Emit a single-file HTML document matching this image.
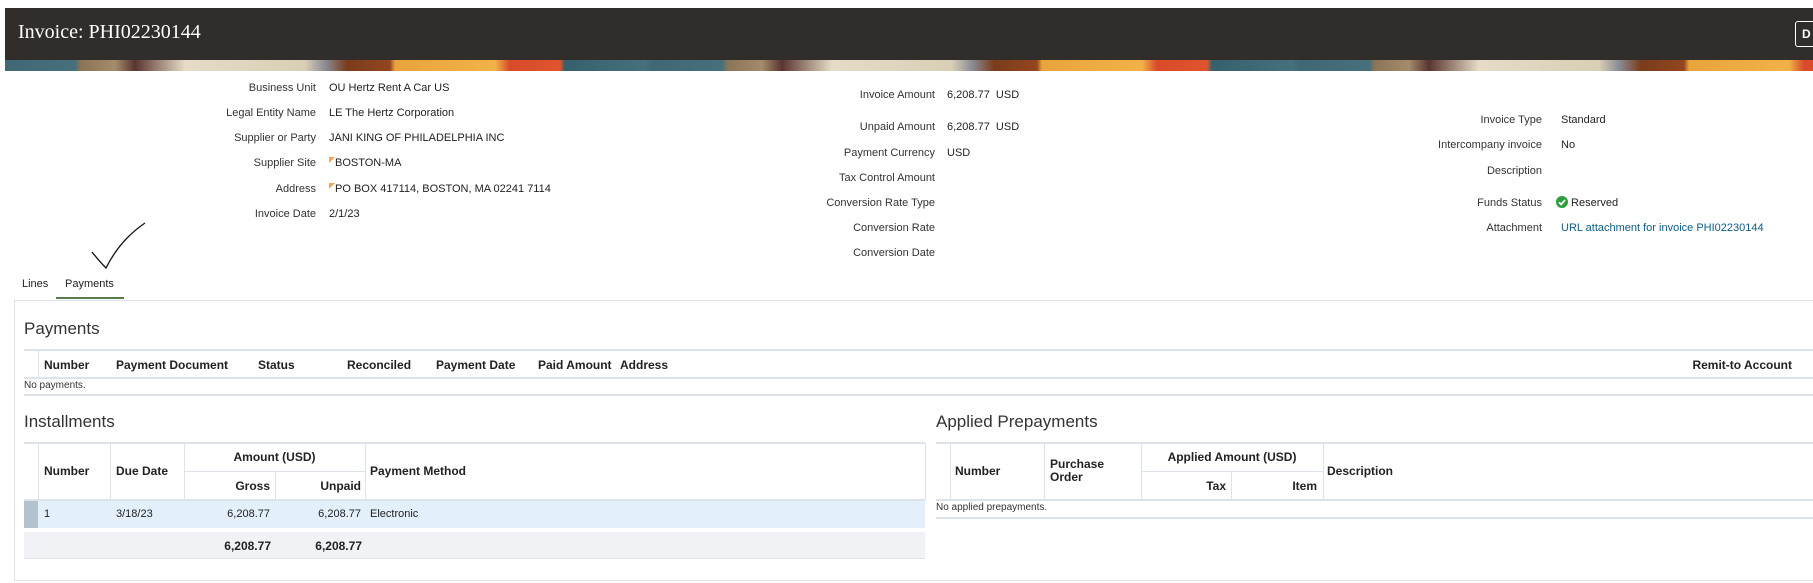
<!DOCTYPE html>
<html><head><meta charset="utf-8"><style>
*{margin:0;padding:0;box-sizing:border-box}
body{width:1813px;height:583px;background:#fff;font-family:"Liberation Sans",Arial,sans-serif;color:#333;position:relative;overflow:hidden;font-size:11px}
.abs{position:absolute;white-space:nowrap}
.bar{left:5px;top:8px;width:1808px;height:52px;background:#312d2a}
.ban{left:5px;top:60px;width:1808px;height:11px;background:repeating-linear-gradient(90deg,#3f6874 0,#47707c 70px,#8c7557 76px,#a38b6b 110px,#5a3530 130px,#e6dcc6 180px,#d9ceb6 300px,#8a8c95 320px,#7a3c1c 342px,#93461f 385px,#e9a43c 390px,#f0b247 490px,#d84a2a 505px,#e0542d 555px,#35606c 560px,#45707c 640px,#3f6874 647px)}
.title{left:18px;top:21px;font-family:"Liberation Serif",serif;font-size:20px;color:#fff}
.btn{left:1795px;top:21px;width:40px;height:26px;border:1px solid #fff;border-radius:3px;color:#fff;font-weight:bold;font-size:12px;padding:5px 6px}
.l{text-align:right;font-size:11px;color:#333}
.v{font-size:11px;color:#222}
.pnl{left:14px;top:300px;width:1810px;height:281px;border:1px solid #dde3ea}
.h2{font-size:17px;color:#333;font-weight:normal}
.th{font-weight:bold;font-size:12px;color:#222}
.hl{height:2px;background:#dde3ea}
.vl{width:1px;background:#dde3ea}
.r{text-align:right}
</style></head><body>
<div class="abs bar"></div><div class="abs ban"></div>
<div class="abs title">Invoice: PHI02230144</div>
<div class="abs btn">D</div>

<div class="abs l" style="right:1497px;top:82px">Business Unit</div><div class="abs v" style="left:329px;top:82px">OU Hertz Rent A Car US</div>
<div class="abs l" style="right:1497px;top:107px">Legal Entity Name</div><div class="abs v" style="left:329px;top:107px">LE The Hertz Corporation</div>
<div class="abs l" style="right:1497px;top:132px">Supplier or Party</div><div class="abs v" style="left:329px;top:132px">JANI KING OF PHILADELPHIA INC</div>
<div class="abs l" style="right:1497px;top:157px">Supplier Site</div><div class="abs v" style="left:329px;top:157px"><span style="display:inline-block;width:0;height:0;border-top:6px solid #f4a460;border-right:6px solid transparent;vertical-align:top"></span>BOSTON-MA</div>
<div class="abs l" style="right:1497px;top:183px">Address</div><div class="abs v" style="left:329px;top:183px"><span style="display:inline-block;width:0;height:0;border-top:6px solid #f4a460;border-right:6px solid transparent;vertical-align:top"></span>PO BOX 417114, BOSTON, MA 02241 7114</div>
<div class="abs l" style="right:1497px;top:208px">Invoice Date</div><div class="abs v" style="left:329px;top:208px">2/1/23</div>

<div class="abs l" style="right:878px;top:89px">Invoice Amount</div><div class="abs v" style="left:947px;top:89px">6,208.77&nbsp; USD</div>
<div class="abs l" style="right:878px;top:121px">Unpaid Amount</div><div class="abs v" style="left:947px;top:121px">6,208.77&nbsp; USD</div>
<div class="abs l" style="right:878px;top:147px">Payment Currency</div><div class="abs v" style="left:947px;top:147px">USD</div>
<div class="abs l" style="right:878px;top:172px">Tax Control Amount</div>
<div class="abs l" style="right:878px;top:197px">Conversion Rate Type</div>
<div class="abs l" style="right:878px;top:222px">Conversion Rate</div>
<div class="abs l" style="right:878px;top:247px">Conversion Date</div>

<div class="abs l" style="right:271px;top:114px">Invoice Type</div><div class="abs v" style="left:1561px;top:114px">Standard</div>
<div class="abs l" style="right:271px;top:139px">Intercompany invoice</div><div class="abs v" style="left:1561px;top:139px">No</div>
<div class="abs l" style="right:271px;top:165px">Description</div>
<div class="abs l" style="right:271px;top:197px">Funds Status</div><div class="abs v" style="left:1556px;top:196px"><svg width="12" height="12" style="vertical-align:-2px"><circle cx="6" cy="6" r="6" fill="#2e9e3e"/><path d="M3 6.2 L5.2 8.4 L9 4" stroke="#fff" stroke-width="1.8" fill="none"/></svg> Reserved</div>
<div class="abs l" style="right:271px;top:222px">Attachment</div><div class="abs v" style="left:1561px;top:222px;color:#0e5c86">URL attachment for invoice PHI02230144</div>

<svg class="abs" style="left:0;top:0" width="200" height="290"><path d="M92 252 Q100 262 106 268 Q120 240 145 223" stroke="#111" stroke-width="1.3" fill="none"/></svg>

<div class="abs" style="left:22px;top:278px;font-size:11px;color:#222">Lines</div>
<div class="abs" style="left:65px;top:278px;font-size:11px;color:#222">Payments</div>
<div class="abs" style="left:56px;top:297px;width:68px;height:2px;background:#5a7a4a"></div>

<div class="abs pnl"></div>
<div class="abs h2" style="left:24px;top:319px">Payments</div>
<div class="abs hl" style="left:24px;top:349px;width:1790px"></div>
<div class="abs vl" style="left:38px;top:350px;height:28px"></div>
<div class="abs th" style="left:44px;top:358px">Number</div>
<div class="abs th" style="left:116px;top:358px">Payment Document</div>
<div class="abs th" style="left:258px;top:358px">Status</div>
<div class="abs th" style="left:347px;top:358px">Reconciled</div>
<div class="abs th" style="left:436px;top:358px">Payment Date</div>
<div class="abs th" style="left:538px;top:358px">Paid Amount</div>
<div class="abs th" style="left:620px;top:358px">Address</div>
<div class="abs th r" style="right:21px;top:358px">Remit-to Account</div>
<div class="abs hl" style="left:24px;top:377px;width:1790px"></div>
<div class="abs" style="left:24px;top:380px;font-size:10px">No payments.</div>
<div class="abs hl" style="left:24px;top:394px;width:1790px"></div>

<div class="abs h2" style="left:24px;top:412px">Installments</div>
<div class="abs hl" style="left:24px;top:442px;width:901px"></div>
<div class="abs vl" style="left:38px;top:443px;height:57px"></div>
<div class="abs vl" style="left:110px;top:443px;height:57px"></div>
<div class="abs vl" style="left:184px;top:443px;height:57px"></div>
<div class="abs vl" style="left:275px;top:472px;height:28px"></div>
<div class="abs vl" style="left:365px;top:443px;height:57px"></div>
<div class="abs vl" style="left:925px;top:443px;height:57px"></div>
<div class="abs" style="left:184px;top:471px;width:181px;height:1px;background:#dde3ea"></div>
<div class="abs th" style="left:44px;top:464px">Number</div>
<div class="abs th" style="left:116px;top:464px">Due Date</div>
<div class="abs th" style="left:184px;width:181px;text-align:center;top:450px">Amount (USD)</div>
<div class="abs th r" style="right:1543px;top:479px">Gross</div>
<div class="abs th r" style="right:1452px;top:479px">Unpaid</div>
<div class="abs th" style="left:370px;top:464px">Payment Method</div>
<div class="abs hl" style="left:24px;top:499px;width:901px"></div>
<div class="abs" style="left:24px;top:501px;width:901px;height:27px;background:#e3effb"></div>
<div class="abs" style="left:24px;top:501px;width:14px;height:27px;background:#b2c2cf"></div>
<div class="abs v" style="left:44px;top:508px">1</div>
<div class="abs v" style="left:116px;top:508px">3/18/23</div>
<div class="abs v r" style="right:1543px;top:508px">6,208.77</div>
<div class="abs v r" style="right:1452px;top:508px">6,208.77</div>
<div class="abs v" style="left:370px;top:508px">Electronic</div>
<div class="abs" style="left:24px;top:532px;width:901px;height:27px;background:#f0f2f5;border-bottom:1px solid #dde3ea"></div>
<div class="abs th r" style="right:1542px;top:539px">6,208.77</div>
<div class="abs th r" style="right:1451px;top:539px">6,208.77</div>

<div class="abs h2" style="left:936px;top:412px">Applied Prepayments</div>
<div class="abs hl" style="left:936px;top:442px;width:877px"></div>
<div class="abs vl" style="left:950px;top:443px;height:57px"></div>
<div class="abs vl" style="left:1044px;top:443px;height:57px"></div>
<div class="abs vl" style="left:1141px;top:443px;height:57px"></div>
<div class="abs vl" style="left:1231px;top:472px;height:28px"></div>
<div class="abs vl" style="left:1323px;top:443px;height:57px"></div>
<div class="abs" style="left:1141px;top:471px;width:182px;height:1px;background:#dde3ea"></div>
<div class="abs th" style="left:955px;top:464px">Number</div>
<div class="abs th" style="left:1050px;top:458px;line-height:13px;white-space:normal;width:60px">Purchase Order</div>
<div class="abs th" style="left:1141px;width:182px;text-align:center;top:450px">Applied Amount (USD)</div>
<div class="abs th r" style="right:587px;top:479px">Tax</div>
<div class="abs th r" style="right:496px;top:479px">Item</div>
<div class="abs th" style="left:1327px;top:464px">Description</div>
<div class="abs hl" style="left:936px;top:499px;width:877px"></div>
<div class="abs" style="left:936px;top:502px;font-size:10px">No applied prepayments.</div>
<div class="abs hl" style="left:936px;top:517px;width:877px"></div>
</body></html>
